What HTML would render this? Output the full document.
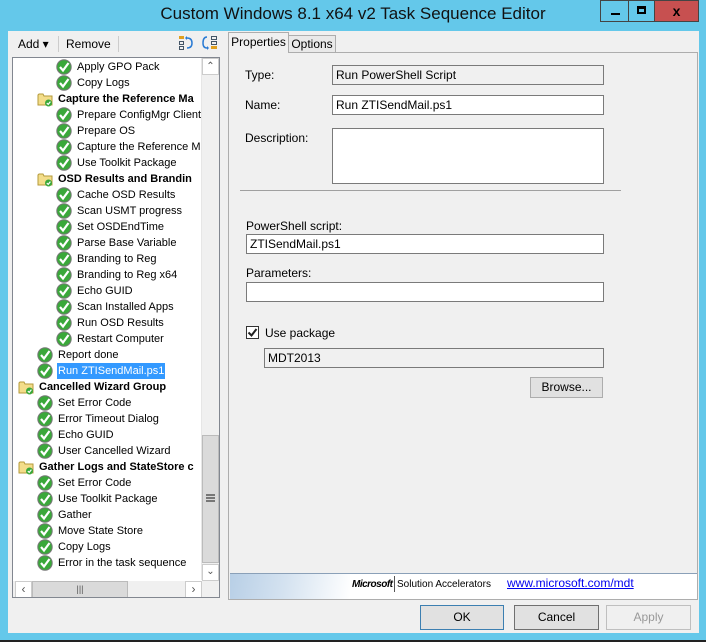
<!DOCTYPE html>
<html><head><meta charset="utf-8"><style>
*{margin:0;padding:0;box-sizing:border-box}
body{width:706px;height:642px;background:#64c8ea;position:relative;overflow:hidden;font-family:"Liberation Sans",sans-serif;font-size:12px;color:#000}
.a{position:absolute}
.title{left:0;top:4px;width:706px;text-align:center;font-size:17px;color:#111}
.client{left:8px;top:31px;width:691px;height:602px;background:#f0f0f0}
.wb{top:0;height:22px;border:1px solid #444;background:#64c8ea}
.box{position:absolute;border:1px solid #7a7a7a;background:#fff;padding:2px 3px;font-size:12px;line-height:14px}
.gray{background:#f0f0f0}
.lbl{position:absolute;font-size:12px}
.tree{left:12px;top:57px;width:208px;height:541px;border:1px solid #828790;background:#fff;overflow:hidden}
.row{position:absolute;height:16px;line-height:16px;white-space:nowrap;font-size:11px}
.row svg{position:absolute;left:0;top:0}
.row span{position:absolute;left:20px;top:0;padding:0 1px}
.b{font-weight:bold}
.btn{position:absolute;top:605px;height:25px;border:1px solid #adadad;background:#e1e1e1;text-align:center;line-height:23px;font-size:12px}
</style></head><body>
<div class="a title">Custom Windows 8.1 x64 v2 Task Sequence Editor</div>
<div class="a wb" style="left:600px;width:30px"><div class="a" style="left:10px;top:12px;width:9px;height:2px;background:#000"></div></div>
<div class="a wb" style="left:628px;width:27px"><div class="a" style="left:8px;top:5px;width:9px;height:8px;border:2px solid #000;border-top-width:3px"></div></div>
<div class="a wb" style="left:654px;width:45px;background:#c75050;color:#000;font-weight:bold;text-align:center;font-size:14px;line-height:20px">x</div>
<div class="a" style="left:0;top:640px;width:706px;height:2px;background:#222"></div>
<div class="a client"></div>

<div class="a" style="left:18px;top:37px;font-size:12px">Add &#9662;</div>
<div class="a" style="left:58px;top:36px;width:1px;height:16px;background:#ccc"></div>
<div class="a" style="left:66px;top:37px">Remove</div>
<div class="a" style="left:118px;top:36px;width:1px;height:16px;background:#ccc"></div>
<svg class="a" style="left:178px;top:35px" width="16" height="16"><rect x="1" y="1" width="5" height="3" fill="#e0a020"/><rect x="1.5" y="6.5" width="4" height="3" fill="none" stroke="#456"/><rect x="1.5" y="11.5" width="4" height="3" fill="none" stroke="#456"/><path d="M9 3 Q14 3 14 8 Q14 13 9 13" fill="none" stroke="#2a7bd4" stroke-width="1.5"/><path d="M9 1 L9 5 L7 3Z" fill="#2a7bd4"/></svg>
<svg class="a" style="left:201px;top:35px" width="17" height="16"><path d="M6 2 Q2 2 2 8 Q2 13 6 13" fill="none" stroke="#2a7bd4" stroke-width="1.5"/><path d="M6 11 L6 15 L8 13Z" fill="#2a7bd4"/><rect x="10.5" y="1.5" width="5" height="3" fill="none" stroke="#456"/><rect x="10.5" y="6.5" width="5" height="3" fill="none" stroke="#456"/><rect x="10" y="11" width="6" height="3" fill="#e0a020"/></svg>

<div class="a tree">
<svg width="0" height="0" style="position:absolute"><defs>
<g id="ck"><circle cx="8" cy="8" r="7.2" fill="#3aa83a" stroke="#777" stroke-width="1"/><path d="M4 8 L7 11.5 L12.5 4" fill="none" stroke="#fff" stroke-width="2.2"/></g>
<g id="fd"><path d="M1 4 L1 14 L15 14 L15 5 L7 5 L6 3 L2 3Z" fill="#f3dd8a" stroke="#b59a3a"/><circle cx="11.5" cy="12" r="3.5" fill="#3aa83a"/><path d="M9.8 12 L11.2 13.4 L13.4 10.6" fill="none" stroke="#fff" stroke-width="1.2"/></g>
</defs></svg>
<div id="rows"></div>
<div class="a" style="left:188px;top:0;width:18px;height:522px;background:#f0f0f0;border-left:1px solid #e6e6e6"></div>
<div class="a" style="left:189px;top:0;width:17px;height:17px;border:1px solid #ccc;background:#fff;text-align:center;font-size:10px;line-height:16px;color:#555">&#8963;</div>
<div class="a" style="left:189px;top:377px;width:17px;height:128px;background:#dadada;border:1px solid #bbb"></div>
<div class="a" style="left:193px;top:436px;width:9px;height:8px;border-top:2px solid #777;border-bottom:2px solid #777"><div style="margin-top:1px;height:2px;background:#777"></div></div>
<div class="a" style="left:189px;top:506px;width:17px;height:17px;border:1px solid #ccc;background:#fff;text-align:center;font-size:10px;line-height:14px;color:#555">&#8964;</div>
<div class="a" style="left:0;top:523px;width:206px;height:17px;background:#f0f0f0"></div>
<div class="a" style="left:2px;top:523px;width:17px;height:17px;border:1px solid #ccc;background:#fff;text-align:center;line-height:15px;color:#555">&lsaquo;</div>
<div class="a" style="left:19px;top:523px;width:96px;height:17px;background:#dadada;border:1px solid #bbb;text-align:center;font-size:9px;line-height:15px;color:#555">|||</div>
<div class="a" style="left:172px;top:523px;width:17px;height:17px;border:1px solid #ccc;background:#fff;text-align:center;line-height:15px;color:#555">&rsaquo;</div>
</div>

<div class="a" style="left:228px;top:52px;width:470px;height:548px;border:1px solid #adadad;background:#f0f0f0"></div>
<div class="a" style="left:228px;top:32px;width:61px;height:21px;border:1px solid #adadad;border-bottom:none;background:#f0f0f0;text-align:center;line-height:19px">Properties</div>
<div class="a" style="left:288px;top:35px;width:48px;height:18px;border:1px solid #adadad;background:#e9e9e9;text-align:center;line-height:17px">Options</div>

<div class="lbl" style="left:245px;top:68px">Type:</div>
<div class="box gray" style="left:332px;top:65px;width:272px;height:20px">Run PowerShell Script</div>
<div class="lbl" style="left:245px;top:98px">Name:</div>
<div class="box" style="left:332px;top:95px;width:272px;height:20px">Run ZTISendMail.ps1</div>
<div class="lbl" style="left:245px;top:131px">Description:</div>
<div class="box" style="left:332px;top:128px;width:272px;height:56px"></div>
<div class="a" style="left:240px;top:190px;width:381px;height:1px;background:#a0a0a0"></div>
<div class="lbl" style="left:246px;top:219px">PowerShell script:</div>
<div class="box" style="left:246px;top:234px;width:358px;height:20px">ZTISendMail.ps1</div>
<div class="lbl" style="left:246px;top:266px">Parameters:</div>
<div class="box" style="left:246px;top:282px;width:358px;height:20px"></div>
<div class="a" style="left:246px;top:326px;width:13px;height:13px;border:1px solid #333;background:#fff"></div>
<svg class="a" style="left:247px;top:327px" width="11" height="11"><path d="M1.5 5.5 L4.5 8.5 L9.5 2" fill="none" stroke="#222" stroke-width="2"/></svg>
<div class="lbl" style="left:265px;top:326px">Use package</div>
<div class="box gray" style="left:264px;top:348px;width:340px;height:20px">MDT2013</div>
<div class="a" style="left:530px;top:377px;width:73px;height:21px;border:1px solid #adadad;background:#e1e1e1;text-align:center;line-height:19px">Browse...</div>

<div class="a" style="left:230px;top:573px;width:467px;height:26px;background:#fff;border-top:1px solid #8aa0b8"></div>
<div class="a" style="left:230px;top:574px;width:120px;height:25px;background:linear-gradient(100deg,#b8cfe6 0%,#d4e2f0 45%,#fff 100%)"></div>
<div class="a" style="left:352px;top:579px;font-size:10px;font-weight:bold;font-style:italic;letter-spacing:-0.5px">Microsoft</div>
<div class="a" style="left:394px;top:576px;width:1px;height:16px;background:#555"></div>
<div class="a" style="left:397px;top:579px;font-size:10px">Solution Accelerators</div>
<div class="a" style="left:507px;top:576px;font-size:12px;color:#0000ee;text-decoration:underline">www.microsoft.com/mdt</div>

<div class="btn" style="left:420px;width:84px;border-color:#3c7fb1">OK</div>
<div class="btn" style="left:514px;width:85px;border-color:#707070">Cancel</div>
<div class="btn" style="left:606px;width:85px;background:#f0f0f0;border-color:#bfbfbf;color:#999">Apply</div>

<script>
var items=[[2,0,"Apply GPO Pack"],[2,0,"Copy Logs"],[1,1,"Capture the Reference Ma"],[2,0,"Prepare ConfigMgr Client"],[2,0,"Prepare OS"],[2,0,"Capture the Reference Ma"],[2,0,"Use Toolkit Package"],[1,1,"OSD Results and Brandin"],[2,0,"Cache OSD Results"],[2,0,"Scan USMT progress"],[2,0,"Set OSDEndTime"],[2,0,"Parse Base Variable"],[2,0,"Branding to Reg"],[2,0,"Branding to Reg x64"],[2,0,"Echo GUID"],[2,0,"Scan Installed Apps"],[2,0,"Run OSD Results"],[2,0,"Restart Computer"],[1,0,"Report done"],[1,0,"Run ZTISendMail.ps1",1],[0,1,"Cancelled Wizard Group"],[1,0,"Set Error Code"],[1,0,"Error Timeout Dialog"],[1,0,"Echo GUID"],[1,0,"User Cancelled Wizard"],[0,1,"Gather Logs and StateStore c"],[1,0,"Set Error Code"],[1,0,"Use Toolkit Package"],[1,0,"Gather"],[1,0,"Move State Store"],[1,0,"Copy Logs"],[1,0,"Error in the task sequence"]];
var h="";items.forEach(function(it,i){var x=[5,24,43][it[0]];var sel=it[3]?' style="background:#3399ff;color:#fff"':'';
h+='<div class="row'+(it[1]?' b':'')+'" style="left:'+x+'px;top:'+(1+i*16)+'px;width:300px"><svg width="16" height="16"><use href="#'+(it[1]?'fd':'ck')+'"/></svg><span'+sel+'>'+it[2]+'</span></div>';});
document.getElementById("rows").innerHTML=h;
</script>
</body></html>
